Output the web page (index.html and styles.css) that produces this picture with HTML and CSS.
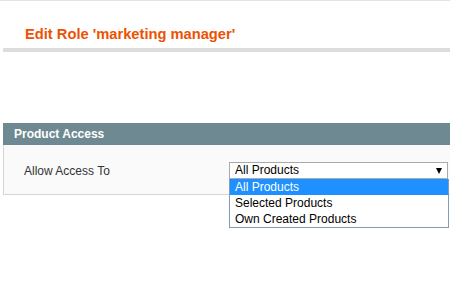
FILE: index.html
```html
<!DOCTYPE html>
<html>
<head>
<meta charset="utf-8">
<link rel="stylesheet" href="styles.css">
</head>
<body>
<div class="topline"></div>
<div class="page">
  <h1 class="title">Edit Role 'marketing manager'</h1>
  <div class="titlebar"></div>
  <div class="section">
    <div class="section-head">Product Access</div>
    <div class="section-body">
      <div class="row">
        <div class="label">Allow Access To</div>
        <div class="select">
          <span class="select-value">All Products</span>
          <span class="arrow"></span>
          <div class="dropdown">
            <div class="opt active">All Products</div>
            <div class="opt">Selected Products</div>
            <div class="opt">Own Created Products</div>
          </div>
        </div>
      </div>
    </div>
  </div>
</div>
</body>
</html>
```
FILE: styles.css
```css
html, body {
  margin: 0;
  padding: 0;
  background: #ffffff;
  font-family: "Liberation Sans", Arial, sans-serif;
  font-size: 12px;
  color: #333333;
}
body {
  min-height: 305px;
}
.topline {
  height: 1px;
  background: #e3e3e3;
}
.page {
  padding-left: 3px;
}
.title {
  margin: 25px 0 0 22px;
  font-size: 14.7px;
  line-height: 16px;
  font-weight: bold;
  color: #eb5202;
}
.titlebar {
  margin-top: 6px;
  height: 4px;
  background: #dddddd;
}
.section {
  margin-top: 71px;
}
.section-head {
  height: 22px;
  line-height: 22px;
  background: #6f8992;
  color: #ffffff;
  font-weight: bold;
  font-size: 12px;
  padding-left: 11px;
}
.section-body {
  background: #fafafa;
  border-left: 1px solid #d6d6d6;
  border-bottom: 1px solid #d6d6d6;
  padding: 17px 0 15px 20px;
}
.row {
  display: flex;
  align-items: center;
}
.label {
  width: 205px;
  color: #333333;
}
.select {
  position: relative;
  box-sizing: border-box;
  width: 219px;
  height: 17px;
  border: 1px solid #a9a9a9;
  background: #ffffff;
  display: flex;
  align-items: center;
  justify-content: space-between;
  padding: 0 5px 0 5px;
  color: #000000;
}
.select-value {
  line-height: 15px;
}
.arrow {
  width: 0;
  height: 0;
  border-left: 3px solid transparent;
  border-right: 3px solid transparent;
  border-top: 6px solid #000000;
  margin-top: 1px;
}
.dropdown {
  position: absolute;
  z-index: 10;
  top: 16px;
  left: -1px;
  width: 220px;
  box-sizing: border-box;
  background: #ffffff;
  border: 1px solid #7f9db9;
  border-top: none;
  display: flex;
  flex-direction: column;
}
.opt {
  height: 16px;
  line-height: 16px;
  padding-left: 5px;
  color: #000000;
  white-space: nowrap;
}
.opt.active {
  background: #1e90ff;
  color: #ffffff;
}
```
